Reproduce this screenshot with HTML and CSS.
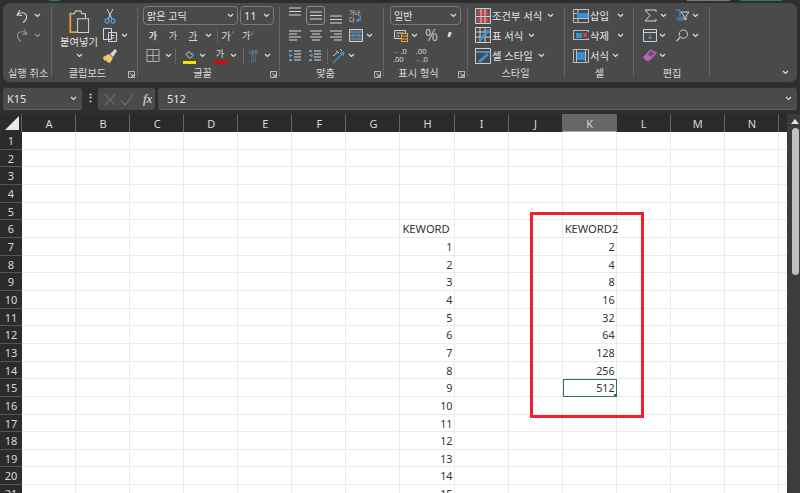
FILE: index.html
```html
<!DOCTYPE html>
<html lang="ko">
<head>
<meta charset="utf-8">
<title>Excel</title>
<link rel="stylesheet" href="styles.css">
</head>
<body>
<svg width="0" height="0" class="defs">
<symbol id="dn" viewBox="0 0 7 5"><path d="M1 1l2.500 2.500L6 1" fill="none" stroke="#dcdcdc" stroke-width="1.200"/></symbol>
<symbol id="launch" viewBox="0 0 8 8"><path d="M.5.5h7v7h-7zM2 2l4 4M6 3.500V6H3.500" fill="none" stroke="#cfcfcf"/></symbol>
</svg>
<div class="strip"><i class="tab-green"></i><i class="tab-gray"></i><i class="tab-green2"></i></div>
<div class="ribbon">
  <section class="grp undo">
    <div class="grp-body">
      <div class="row r1"><svg class="i16" viewBox="0 0 16 16"><path d="M6 2L3 7l5 .5M3 7c3-3.500 9-3 9.500 1.500.3 2.500-1.500 4.500-3.500 6" fill="none" stroke="#d8d8d8" stroke-width="1.100"/></svg><svg class="dn"><use href="#dn"/></svg></div>
      <div class="row r2 dim"><svg class="i16" viewBox="0 0 16 16"><path d="M10 2l3 5-5 .5M13 7c-3-3.500-9-3-9.500 1.500-.3 2.500 1.500 4.500 3.500 6" fill="none" stroke="#d8d8d8" stroke-width="1.100"/></svg><svg class="dn"><use href="#dn"/></svg></div>
    </div>
    <h2>실행 취소</h2>
  </section>
  <section class="grp clip">
    <div class="grp-body clip-body">
      <div class="paste">
        <svg class="i-paste" viewBox="0 0 24 26"><path d="M7 4l1-3h6l1 3h4v5M7 4H3" fill="none" stroke="#d9d9d9" stroke-width="1.100"/><path d="M2.500 3v21H10" fill="none" stroke="#e8a13a" stroke-width="2"/><rect x="10.500" y="9.500" width="12" height="15" fill="#4a4a4a" stroke="#dedede"/></svg>
        <span>붙여넣기</span>
        <svg class="dn"><use href="#dn"/></svg>
      </div>
      <div class="clip-tools">
        <div class="row r1"><svg class="i16" viewBox="0 0 16 16"><path d="M5 1l5 10M11 1L6 11" fill="none" stroke="#d8d8d8"/><circle cx="5" cy="13" r="2" fill="none" stroke="#4a9ad8" stroke-width="1.300"/><circle cx="11" cy="13" r="2" fill="none" stroke="#4a9ad8" stroke-width="1.300"/></svg></div>
        <div class="row r2"><svg class="i16" viewBox="0 0 16 16"><path d="M1.500 1.500h8v11h-8zM6.500 5.500h8v9h-8zM8.500 8.500h4M8.500 11h4" fill="#4a4a4a" stroke="#d8d8d8"/></svg><svg class="dn ml3"><use href="#dn"/></svg></div>
        <div class="row r3"><svg class="i16" viewBox="0 0 16 16"><path d="M1 9l6-3 4 4-3 5-3-1-1-2-2 1z" fill="#f0c668"/><path d="M8 6l5-5 2 2-4 6z" fill="#d8d8d8"/></svg></div>
      </div>
    </div>
    <h2>클립보드</h2>
    <svg class="launch"><use href="#launch"/></svg>
  </section>
  <section class="grp font">
    <div class="grp-body">
      <div class="row r1">
        <div class="combo font-name"><span>맑은 고딕</span><svg class="dn"><use href="#dn"/></svg></div>
        <div class="combo font-size ml2"><span>11</span><svg class="dn"><use href="#dn"/></svg></div>
      </div>
      <div class="row r2">
        <b class="g">가</b><em class="g">가</em><u class="g">가</u><svg class="dn ml2"><use href="#dn"/></svg>
        <i class="vsep short ml5"></i>
        <span class="g big">가<sup>^</sup></span><span class="g">가<sup>v</sup></span>
      </div>
      <div class="row r3">
        <svg class="i14 ml3" viewBox="0 0 14 14"><path d="M.5.500h13v13H.5zM7 .5v13M.5 7h13" fill="none" stroke="#b8b8b8"/></svg><svg class="dn ml5"><use href="#dn"/></svg>
        <i class="vsep ml3"></i>
        <span class="color ml6"><svg class="i-fill" viewBox="0 0 12 9"><path d="M6 1l4 4-3 3-4-4z" fill="none" stroke="#d8d8d8"/><path d="M9 1.500l2 3-2 .5z" fill="#3d8fd0"/></svg><i class="bar yellow"></i></span><svg class="dn ml3"><use href="#dn"/></svg>
        <span class="color ml7"><span class="g tiny">가</span><i class="bar red"></i></span><svg class="dn ml3"><use href="#dn"/></svg>
        <i class="vsep ml6"></i>
        <span class="phon ml3">내천<br><span class="phon-b">|||</span></span><svg class="dn ml4"><use href="#dn"/></svg>
      </div>
    </div>
    <h2>글꼴</h2>
    <svg class="launch"><use href="#launch"/></svg>
  </section>
  <section class="grp align">
    <div class="grp-body">
      <div class="row r1">
        <svg class="i14 top" viewBox="0 0 14 12"><path d="M1 1.500h12M1 5h12M1 8.500h12" stroke="#d8d8d8" stroke-width="1.200"/></svg>
        <span class="active ml4"><svg class="i14" viewBox="0 0 14 12"><path d="M1 2.500h12M1 6h12M1 9.500h12" stroke="#d8d8d8" stroke-width="1.200"/></svg></span>
        <svg class="i14 bottom ml4" viewBox="0 0 14 12"><path d="M1 3.500h12M1 7h12M1 10.500h12" stroke="#d8d8d8" stroke-width="1.200"/></svg>
        <span class="wrap ml6">가나<br>다<b>↲</b></span>
      </div>
      <div class="row r2">
        <svg class="i14" viewBox="0 0 14 12"><path d="M1 1.500h12M1 4.500h8M1 7.500h12M1 10.500h8" stroke="#d8d8d8" stroke-width="1.200"/></svg>
        <svg class="i14 ml7" viewBox="0 0 14 12"><path d="M1 1.500h12M3 4.500h8M1 7.500h12M3 10.500h8" stroke="#d8d8d8" stroke-width="1.200"/></svg>
        <svg class="i14 ml6" viewBox="0 0 14 12"><path d="M1 1.500h12M5 4.500h8M1 7.500h12M5 10.500h8" stroke="#d8d8d8" stroke-width="1.200"/></svg>
        <svg class="i14 ml6" viewBox="0 0 14 13"><path d="M.5.500h13v12H.5z" fill="#5c5c5c" stroke="#d0d0d0"/><path d="M1 6.500h12M3 6.500l2-2M3 6.500l2 2M11 6.500l-2-2M11 6.500l-2 2M1 3h12M1 10h12" fill="none" stroke="#4a9ad8"/></svg>
        <svg class="dn ml3"><use href="#dn"/></svg>
      </div>
      <div class="row r3">
        <svg class="i14" viewBox="0 0 14 12"><path d="M6 1.500h7M6 4.500h7M6 7.500h7M6 10.500h7M1 1.500h3M1 10.500h3" fill="none" stroke="#d8d8d8"/><path d="M1 6h4M1 6l2-1.500M1 6l2 1.500" fill="none" stroke="#4a9ad8" stroke-width="1.200"/></svg>
        <svg class="i14 ml6" viewBox="0 0 14 12"><path d="M6 1.500h7M6 4.500h7M6 7.500h7M6 10.500h7M1 1.500h3M1 10.500h3" fill="none" stroke="#d8d8d8"/><path d="M1 6h4M5 6L3 4.500M5 6L3 7.500" fill="none" stroke="#4a9ad8" stroke-width="1.200"/></svg>
        <i class="vsep ml5"></i>
        <svg class="i16 ml3" viewBox="0 0 16 16"><path d="M2 15L13 4M13 4l-4 1M13 4l-1 4" fill="none" stroke="#3f93d3" stroke-width="1.200"/><path d="M2 8l4-3M5 3l3 2M9 1l2 2" stroke="#cfcfcf" fill="none"/></svg>
        <svg class="dn ml1"><use href="#dn"/></svg>
      </div>
    </div>
    <h2>맞춤</h2>
    <svg class="launch"><use href="#launch"/></svg>
  </section>
  <section class="grp num">
    <div class="grp-body">
      <div class="row r1"><div class="combo num-name"><span>일반</span><svg class="dn"><use href="#dn"/></svg></div></div>
      <div class="row r2">
        <svg class="i16 ml3" viewBox="0 0 16 14"><path d="M1.500 2.500h11v8h-11z" fill="none" stroke="#cfcfcf"/><path d="M3.500 5h7M3.500 8h3" stroke="#cfcfcf"/><rect x="8.500" y="5.500" width="6" height="8" fill="#4a4a4a" stroke="#e8a13a"/><path d="M9 8h5M9 11h5" stroke="#e8a13a"/></svg><svg class="dn ml2"><use href="#dn"/></svg>
        <span class="pct ml7">%</span><span class="comma">,</span>
      </div>
      <div class="row r3">
        <span class="dec ml3"><b>←</b>.0<br>.00</span>
        <span class="dec">&nbsp;.00<br><b>→</b>.0</span>
      </div>
    </div>
    <h2>표시 형식</h2>
    <svg class="launch"><use href="#launch"/></svg>
  </section>
  <section class="grp style">
    <div class="grp-body">
      <div class="row r1 item"><svg class="i16" viewBox="0 0 16 16"><path d="M.5.500h15v15H.5z" fill="#5c5c5c" stroke="#cfcfcf"/><path d="M3 2h10v5H3z" fill="#d93a3a"/><path d="M3 10h10v4H3z" fill="#d93a3a"/><path d="M6 1v14M10 1v14M1 8.500h14" stroke="#cfcfcf"/></svg><span>조건부 서식</span><svg class="dn ml4"><use href="#dn"/></svg></div>
      <div class="row r2 item"><svg class="i16" viewBox="0 0 16 16"><path d="M.5.500h15v15H.5zM5 1v14M10 1v14M1 5h14M1 10h14" fill="none" stroke="#cfcfcf"/><path d="M4 14L14 3" stroke="#3f93d3" stroke-width="3"/></svg><span>표 서식</span><svg class="dn ml4"><use href="#dn"/></svg></div>
      <div class="row r3 item"><svg class="i16" viewBox="0 0 16 16"><path d="M.5.500h15v15H.5z" fill="none" stroke="#cfcfcf"/><path d="M1 4h14" stroke="#3f93d3" stroke-width="2"/><path d="M4 14L13 6" stroke="#3f93d3" stroke-width="3"/></svg><span>셀 스타일</span><svg class="dn ml4"><use href="#dn"/></svg></div>
    </div>
    <h2>스타일</h2>
  </section>
  <section class="grp cells">
    <div class="grp-body">
      <div class="row r1 item"><svg class="i16" viewBox="0 0 16 14"><path d="M.5.500h15v13H.5zM5 1v12M1 4.500h14M1 9.500h14" fill="none" stroke="#bcbcbc"/><path d="M4 4h11v5H4z" fill="#2f90dc"/></svg><span>삽입</span><svg class="dn ml7"><use href="#dn"/></svg></div>
      <div class="row r2 item"><svg class="i16" viewBox="0 0 16 14"><path d="M.5 2.500h15M.5 11.500h15M.5 2v10M15.500 2v2M15.500 10v2" fill="none" stroke="#bcbcbc"/><path d="M3 5h6v5H3z" fill="#2f90dc"/><path d="M10.500 5l3.500 4M14 5l-3.500 4" stroke="#e24a4a" stroke-width="1.200"/></svg><span>삭제</span><svg class="dn ml7"><use href="#dn"/></svg></div>
      <div class="row r3 item"><svg class="i16" viewBox="0 0 16 14"><path d="M.5.500h15v13H.5zM3.500 1v12M12.500 1v12" fill="none" stroke="#bcbcbc"/><path d="M4 3h8v8H4z" fill="#2f90dc"/></svg><span>서식</span><svg class="dn ml2"><use href="#dn"/></svg></div>
    </div>
    <h2>셀</h2>
  </section>
  <section class="grp edit">
    <div class="grp-body edit-body">
      <div class="row"><svg class="i14" viewBox="0 0 14 13"><path d="M13 3V1H2l5 5.500L2 12h11v-2" fill="none" stroke="#d8d8d8"/></svg><svg class="dn ml3"><use href="#dn"/></svg></div>
      <div class="row"><svg class="i14" viewBox="0 0 14 13"><path d="M1 1h4v7M1 9h8M2 11h6" fill="none" stroke="#4a9ad8"/><path d="M6 3h8l-3 4v4l-2-1V7z" fill="none" stroke="#d8d8d8"/></svg><svg class="dn ml3"><use href="#dn"/></svg></div>
      <div class="row"><svg class="i14" viewBox="0 0 14 13"><path d="M.5.500h13v12H.5zM1 3.500h12" fill="none" stroke="#cfcfcf"/><path d="M7 5v5M5 8l2 2 2-2" fill="none" stroke="#4a9ad8"/></svg><svg class="dn ml2"><use href="#dn"/></svg></div>
      <div class="row"><svg class="i14" viewBox="0 0 14 14"><circle cx="8.500" cy="5.500" r="4.500" fill="none" stroke="#d8d8d8"/><path d="M5 9l-4 4" stroke="#d8d8d8" stroke-width="1.300"/></svg><svg class="dn ml3"><use href="#dn"/></svg></div>
      <div class="row"><svg class="i14" viewBox="0 0 14 13"><path d="M1 8l7-7 5 3-7 7H3z" fill="#5c5c5c" stroke="#c35fc8" stroke-width="1.300"/><path d="M1 8l3-3 4 3-3 3H3z" fill="#c35fc8"/></svg><svg class="dn ml2"><use href="#dn"/></svg></div>
    </div>
    <h2>편집</h2>
  </section>
  <div class="collapse"><svg class="dn"><use href="#dn"/></svg></div>
</div>
<div class="formula">
  <div class="namebox"><span>K15</span><svg class="dn"><use href="#dn"/></svg></div>
  <span class="dots">⋮</span>
  <div class="fx-box">
    <svg class="i14" viewBox="0 0 14 13"><path d="M1.500 1l11 11M12.500 1l-11 11" stroke="#7d7d7d"/></svg>
    <svg class="i14" viewBox="0 0 14 13"><path d="M1 7l4 5 8-10" fill="none" stroke="#7d7d7d"/></svg>
    <span class="fx">fx</span>
  </div>
  <div class="input"><span>512</span><svg class="dn"><use href="#dn"/></svg></div>
</div>
<div class="workarea">
  <div class="sheet">
    <div class="corner"><i></i></div><div class="ch">A</div><div class="ch">B</div><div class="ch">C</div><div class="ch">D</div><div class="ch">E</div><div class="ch">F</div><div class="ch">G</div><div class="ch">H</div><div class="ch">I</div><div class="ch">J</div><div class="ch sel">K</div><div class="ch">L</div><div class="ch">M</div><div class="ch">N</div><div class="ch"></div>
    <div class="rh">1</div><p></p><p></p><p></p><p></p><p></p><p></p><p></p><p></p><p></p><p></p><p></p><p></p><p></p><p></p><p></p>
    <div class="rh">2</div><p></p><p></p><p></p><p></p><p></p><p></p><p></p><p></p><p></p><p></p><p></p><p></p><p></p><p></p><p></p>
    <div class="rh">3</div><p></p><p></p><p></p><p></p><p></p><p></p><p></p><p></p><p></p><p></p><p></p><p></p><p></p><p></p><p></p>
    <div class="rh">4</div><p></p><p></p><p></p><p></p><p></p><p></p><p></p><p></p><p></p><p></p><p></p><p></p><p></p><p></p><p></p>
    <div class="rh">5</div><p></p><p></p><p></p><p></p><p></p><p></p><p></p><p></p><p></p><p></p><p></p><p></p><p></p><p></p><p></p>
    <div class="rh">6</div><p></p><p></p><p></p><p></p><p></p><p></p><p></p><p>KEWORD</p><p></p><p></p><p>KEWORD2</p><p></p><p></p><p></p><p></p>
    <div class="rh">7</div><p></p><p></p><p></p><p></p><p></p><p></p><p></p><p class="n">1</p><p></p><p></p><p class="n">2</p><p></p><p></p><p></p><p></p>
    <div class="rh">8</div><p></p><p></p><p></p><p></p><p></p><p></p><p></p><p class="n">2</p><p></p><p></p><p class="n">4</p><p></p><p></p><p></p><p></p>
    <div class="rh">9</div><p></p><p></p><p></p><p></p><p></p><p></p><p></p><p class="n">3</p><p></p><p></p><p class="n">8</p><p></p><p></p><p></p><p></p>
    <div class="rh">10</div><p></p><p></p><p></p><p></p><p></p><p></p><p></p><p class="n">4</p><p></p><p></p><p class="n">16</p><p></p><p></p><p></p><p></p>
    <div class="rh">11</div><p></p><p></p><p></p><p></p><p></p><p></p><p></p><p class="n">5</p><p></p><p></p><p class="n">32</p><p></p><p></p><p></p><p></p>
    <div class="rh">12</div><p></p><p></p><p></p><p></p><p></p><p></p><p></p><p class="n">6</p><p></p><p></p><p class="n">64</p><p></p><p></p><p></p><p></p>
    <div class="rh">13</div><p></p><p></p><p></p><p></p><p></p><p></p><p></p><p class="n">7</p><p></p><p></p><p class="n">128</p><p></p><p></p><p></p><p></p>
    <div class="rh">14</div><p></p><p></p><p></p><p></p><p></p><p></p><p></p><p class="n">8</p><p></p><p></p><p class="n">256</p><p></p><p></p><p></p><p></p>
    <div class="rh">15</div><p></p><p></p><p></p><p></p><p></p><p></p><p></p><p class="n">9</p><p></p><p></p><p class="n active-cell">512</p><p></p><p></p><p></p><p></p>
    <div class="rh">16</div><p></p><p></p><p></p><p></p><p></p><p></p><p></p><p class="n">10</p><p></p><p></p><p></p><p></p><p></p><p></p><p></p>
    <div class="rh">17</div><p></p><p></p><p></p><p></p><p></p><p></p><p></p><p class="n">11</p><p></p><p></p><p></p><p></p><p></p><p></p><p></p>
    <div class="rh">18</div><p></p><p></p><p></p><p></p><p></p><p></p><p></p><p class="n">12</p><p></p><p></p><p></p><p></p><p></p><p></p><p></p>
    <div class="rh">19</div><p></p><p></p><p></p><p></p><p></p><p></p><p></p><p class="n">13</p><p></p><p></p><p></p><p></p><p></p><p></p><p></p>
    <div class="rh">20</div><p></p><p></p><p></p><p></p><p></p><p></p><p></p><p class="n">14</p><p></p><p></p><p></p><p></p><p></p><p></p><p></p>
    <div class="rh">21</div><p></p><p></p><p></p><p></p><p></p><p></p><p></p><p class="n">15</p><p></p><p></p><p></p><p></p><p></p><p></p><p></p>
    <div class="highlight"></div>
  </div>
  <div class="vscroll"><svg class="arrow" viewBox="0 0 8 5"><path d="M4 0l4 5H0z" fill="#e6e6e6"/></svg><i class="thumb"></i></div>
</div>
</body>
</html>
```
FILE: styles.css
```css
* { box-sizing: border-box; }
html, body { margin: 0; height: 100%; }
body {
  width: 800px; height: 493px; overflow: hidden;
  background: #302e2d; color: #e4e4e4;
  font-family: "Noto Sans CJK KR", "Noto Sans", sans-serif;
  font-size: 10.300px;
  display: flex; flex-direction: column;
}
.defs { position: absolute; }
.strip { height: 3px; display: flex; flex: none; padding-left: 49px; }
.strip i { display: block; height: 1px; }
.tab-green { width: 11px; background: #2e7d4f; }
.tab-gray { width: 43px; margin-left: 627px; background: #777; }
.tab-green2 { width: 42px; margin-left: 10px; background: #2e7d4f; }

.ribbon {
  flex: none; height: 79px; margin: 0 3px; border-radius: 7px;
  background: #4a4a4a; display: flex; padding-top: 3px;
}
.grp { display: flex; flex-direction: column; flex: none; position: relative; }
.grp::after { content: ""; position: absolute; right: 0; top: 1px; bottom: 5px; width: 1px; background: #646464; }
.grp-body { flex: 1; min-height: 0; }
.grp h2 { margin: 0 0 2px; height: 15px; font-size: 10.200px; font-weight: 400; line-height: 15px; text-align: center; color: #d6d6d6; white-space: nowrap; }
.launch { width: 7px; height: 7px; position: absolute; right: 3.500px; bottom: 4px; }
.row { display: flex; align-items: center; white-space: nowrap; }
.r1 { height: 19px; }
.r2 { height: 20px; }
.r3 { height: 21px; }
.dn { width: 7px; height: 5px; flex: none; }
.dim { opacity: .5; }
.i16 { width: 16px; height: 16px; flex: none; }
.i14 { width: 14px; height: 13px; flex: none; }
.vsep { width: 1px; height: 16px; background: #666; flex: none; display: block; }
.vsep.short { height: 14px; }
.ml1 { margin-left: 1px; }
.ml2 { margin-left: 2px; }
.ml3 { margin-left: 3px; }
.ml4 { margin-left: 4px; }
.ml5 { margin-left: 5px; }
.ml6 { margin-left: 6px; }
.ml7 { margin-left: 7px; }

.undo { width: 49px; }
.undo .grp-body { padding-left: 11px; }
.undo .row { gap: 4px; }
.undo h2 { text-align: left; padding-left: 5px; }

.clip { width: 86px; }
.clip h2 { padding-right: 15px; }
.clip-body { display: flex; padding-left: 5px; }
.paste { width: 44px; flex: none; display: flex; flex-direction: column; align-items: center; padding-top: 4px; white-space: nowrap; }
.i-paste { width: 22px; height: 24px; flex: none; }
.paste span { line-height: 14px; margin-top: 1px; }
.paste .dn { margin-top: 4px; }
.clip-tools { margin-left: 1px; }

.font { width: 142px; }
.font .grp-body { padding-left: 5px; }
.font h2 { padding-right: 13px; }
.combo { height: 19px; flex: none; border: 1px solid #7a7a7a; border-radius: 4px; display: flex; align-items: center; justify-content: space-between; padding: 0 3px 0 3px; font-size: 10px; }
.font-name { width: 95px; }
.font-size { width: 34px; font-family: "Noto Sans", sans-serif; font-size: 11px; }
.g { font-weight: 400; font-style: normal; color: #dcdcdc; width: 20px; flex: none; text-align: center; font-size: 9px; }
.font .r2 b { font-weight: 700; }
.big { font-size: 10.500px; }
sup { font-size: 7px; line-height: 0; color: #4a9ad8; }
.color { display: flex; flex-direction: column; align-items: center; width: 14px; height: 17px; justify-content: flex-end; flex: none; }
.i-fill { width: 12px; height: 10px; flex: none; }
.bar { display: block; width: 13px; height: 3px; margin-top: 1px; flex: none; }
.yellow { background: #f5e400; }
.red { background: #e60000; }
.tiny { font-size: 9px; line-height: 12px; width: 14px; }
.phon { width: 13px; flex: none; font-size: 5px; line-height: 6px; text-align: center; color: #a8a8a8; }
.phon-b { color: #4a9ad8; font-size: 7px; }

.align { width: 104px; }
.align .grp-body { padding-left: 8px; }
.align h2 { padding-right: 13px; }
.top { align-self: flex-start; }
.bottom { align-self: flex-end; }
.active { width: 19px; height: 19px; flex: none; border: 1px solid #8c8c8c; border-radius: 3px; display: flex; align-items: center; justify-content: center; }
.wrap { font-size: 6px; line-height: 7px; color: #d8d8d8; margin-top: 1px; }
.wrap b { color: #4a9ad8; font-size: 9px; line-height: 0; }

.num { width: 84px; }
.num .grp-body { padding-left: 6px; }
.num h2 { padding-right: 15px; }
.num-name { width: 71px; }
.pct { font-size: 16px; font-family: "Noto Sans", sans-serif; font-weight: 300; line-height: 20px; }
.comma { font-size: 20px; font-weight: 700; line-height: 4px; height: 20px; margin-left: 9px; font-family: "Noto Sans", sans-serif; }
.dec { width: 21px; flex: none; font-size: 7.500px; line-height: 7.500px; font-family: "Noto Sans", sans-serif; color: #d8d8d8; }
.dec b { color: #4a9ad8; font-weight: 400; }

.style { width: 97px; }
.style .grp-body { padding-left: 7px; }
.style h2 { padding-right: 2px; }
.item { gap: 1px; }
.cells { width: 69px; }
.cells .grp-body { padding-left: 8px; }
.edit { width: 76px; }
.edit-body { display: grid; grid-template-columns: 32px 32px; grid-template-rows: 19px 20px 21px; padding-left: 9px; }
.collapse { flex: 1; display: flex; align-items: flex-end; justify-content: flex-end; padding: 0 8px 7px 0; }

.formula { flex: none; height: 22px; margin: 6px 3px 0; display: flex; gap: 3px; align-items: stretch; font-family: "Noto Sans", sans-serif; font-size: 11px; }
.namebox { width: 79px; flex: none; background: #4a4a4a; border-radius: 3px; border-bottom: 1px solid #5e5e5e; display: flex; align-items: center; justify-content: space-between; padding: 0 5px 0 4px; }
.dots { width: 10px; flex: none; text-align: center; line-height: 20px; font-weight: 700; }
.fx-box { width: 57px; flex: none; background: #4a4a4a; border-radius: 3px; display: flex; align-items: center; gap: 3px; padding-left: 5px; }
.fx { font-family: "Liberation Serif", serif; font-style: italic; font-size: 13px; margin-left: 6px; }
.input { flex: 1; background: #4a4a4a; border-radius: 3px; border-bottom: 1px solid #5e5e5e; display: flex; align-items: center; justify-content: space-between; padding: 0 5px 0 9px; }

.workarea { flex: none; height: 379px; margin-top: 4px; display: flex; }
.sheet {
  width: 787px; height: 379px; overflow: hidden; position: relative; flex: none;
  display: grid; grid-template-columns: 22px repeat(15, 54.070px); grid-template-rows: 18px; grid-auto-rows: 17.670px;
  background: #fff; font-family: "Noto Sans", sans-serif; font-size: 11.200px;
}
.sheet p { margin: 0; border-right: 1px solid #ebebeb; border-bottom: 1px solid #ebebeb; color: #333; padding: 0 1px 0 2px; line-height: 18px; white-space: nowrap; }
.sheet .n { text-align: right; font-size: 10.800px; }
.corner { background: #2b2b2b; position: relative; border-right: 1px solid #666; }
.corner i { position: absolute; right: 2px; bottom: 2px; width: 0; height: 0; border-style: solid; border-width: 0 0 14px 14px; border-color: transparent transparent #e8e8e8 transparent; }
.ch { background: #2b2b2b; color: #d8d8d8; text-align: center; line-height: 19px; font-size: 11px; border-right: 1px solid #666; padding-left: 1px; }
.ch.sel { background: #666; border-bottom: 1px solid #8fb8a0; }
.rh { background: #2b2b2b; color: #d8d8d8; text-align: center; line-height: 18px; font-size: 11px; border-bottom: 1px solid #555; }
.active-cell { outline: 1px solid #2f7350; outline-offset: -1px; position: relative; }
.active-cell::after { content: ""; position: absolute; right: -1px; bottom: -1px; width: 3px; height: 3px; background: #2f7350; }
.highlight { position: absolute; left: 530px; top: 98px; width: 114px; height: 206px; border: 3px solid #f02030; pointer-events: none; }
.vscroll { flex: 1; background: #3c3c3c; padding: 5px 0 0 4px; }
.arrow { width: 8px; height: 5px; display: block; margin-bottom: 4px; }
.thumb { display: block; width: 7px; height: 147px; margin-left: 1px; background: #c0c0c0; border-radius: 4px; }
```
